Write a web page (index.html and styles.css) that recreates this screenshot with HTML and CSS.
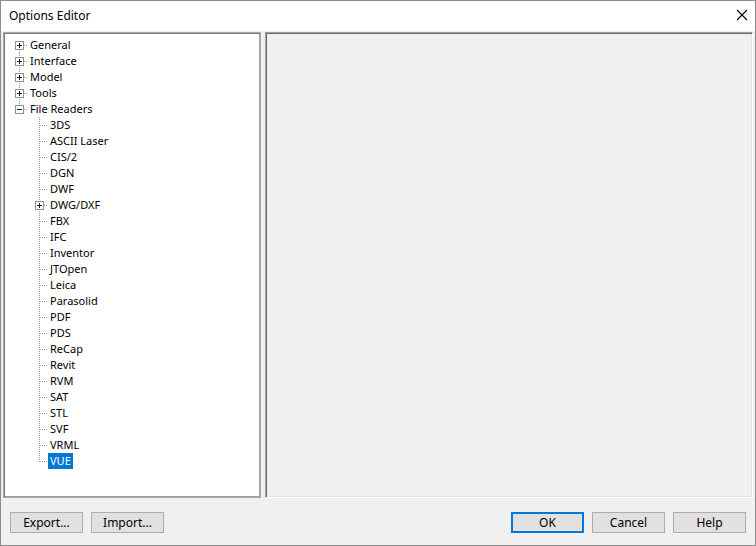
FILE: index.html
```html
<!DOCTYPE html>
<html>
<head>
<meta charset="utf-8">
<link rel="stylesheet" href="styles.css">
</head>
<body>
<div class="window">
  <div class="titlebar">
    <span class="title">Options Editor</span>
    <svg class="close" width="12" height="12" viewBox="0 0 12 12"><path d="M1 1 L11 11 M11 1 L1 11" stroke="#000" stroke-width="1.1" fill="none"/></svg>
  </div>
  <div class="content">
    <div class="panels">
      <div class="tree">
        <div class="row"><svg class="l0" width="18" height="16"><path d="M9.5 13V16" class="dot"/><path d="M14 8.5H18" class="dot"/><rect x="5.5" y="4.5" width="8" height="8" class="box"/><path d="M7 8.5H12M9.5 6V11" class="sign"/></svg><span class="label">General</span></div>
        <div class="row"><svg class="l0" width="18" height="16"><path d="M9.5 0V16" class="dot"/><path d="M14 8.5H18" class="dot"/><rect x="5.5" y="4.5" width="8" height="8" class="box"/><path d="M7 8.5H12M9.5 6V11" class="sign"/></svg><span class="label">Interface</span></div>
        <div class="row"><svg class="l0" width="18" height="16"><path d="M9.5 0V16" class="dot"/><path d="M14 8.5H18" class="dot"/><rect x="5.5" y="4.5" width="8" height="8" class="box"/><path d="M7 8.5H12M9.5 6V11" class="sign"/></svg><span class="label">Model</span></div>
        <div class="row"><svg class="l0" width="18" height="16"><path d="M9.5 0V16" class="dot"/><path d="M14 8.5H18" class="dot"/><rect x="5.5" y="4.5" width="8" height="8" class="box"/><path d="M7 8.5H12M9.5 6V11" class="sign"/></svg><span class="label">Tools</span></div>
        <div class="row"><svg class="l0" width="18" height="16"><path d="M9.5 0V4" class="dot"/><path d="M14 8.5H18" class="dot"/><rect x="5.5" y="4.5" width="8" height="8" class="box"/><path d="M7 8.5H12" class="sign"/></svg><span class="label">File Readers</span></div>

        <div class="row"><svg width="38" height="16"><path d="M29.5 0V16M30 8.5H38" class="dot"/></svg><span class="label">3DS</span></div>
        <div class="row"><svg width="38" height="16"><path d="M29.5 0V16M30 8.5H38" class="dot"/></svg><span class="label">ASCII Laser</span></div>
        <div class="row"><svg width="38" height="16"><path d="M29.5 0V16M30 8.5H38" class="dot"/></svg><span class="label">CIS/2</span></div>
        <div class="row"><svg width="38" height="16"><path d="M29.5 0V16M30 8.5H38" class="dot"/></svg><span class="label">DGN</span></div>
        <div class="row"><svg width="38" height="16"><path d="M29.5 0V16M30 8.5H38" class="dot"/></svg><span class="label">DWF</span></div>
        <div class="row"><svg width="38" height="16"><path d="M29.5 0V16M34 8.5H38" class="dot"/><rect x="25.5" y="4.5" width="8" height="8" class="box"/><path d="M27 8.5H32M29.5 6V11" class="sign"/></svg><span class="label">DWG/DXF</span></div>
        <div class="row"><svg width="38" height="16"><path d="M29.5 0V16M30 8.5H38" class="dot"/></svg><span class="label">FBX</span></div>
        <div class="row"><svg width="38" height="16"><path d="M29.5 0V16M30 8.5H38" class="dot"/></svg><span class="label">IFC</span></div>
        <div class="row"><svg width="38" height="16"><path d="M29.5 0V16M30 8.5H38" class="dot"/></svg><span class="label">Inventor</span></div>
        <div class="row"><svg width="38" height="16"><path d="M29.5 0V16M30 8.5H38" class="dot"/></svg><span class="label">JTOpen</span></div>
        <div class="row"><svg width="38" height="16"><path d="M29.5 0V16M30 8.5H38" class="dot"/></svg><span class="label">Leica</span></div>
        <div class="row"><svg width="38" height="16"><path d="M29.5 0V16M30 8.5H38" class="dot"/></svg><span class="label">Parasolid</span></div>
        <div class="row"><svg width="38" height="16"><path d="M29.5 0V16M30 8.5H38" class="dot"/></svg><span class="label">PDF</span></div>
        <div class="row"><svg width="38" height="16"><path d="M29.5 0V16M30 8.5H38" class="dot"/></svg><span class="label">PDS</span></div>
        <div class="row"><svg width="38" height="16"><path d="M29.5 0V16M30 8.5H38" class="dot"/></svg><span class="label">ReCap</span></div>
        <div class="row"><svg width="38" height="16"><path d="M29.5 0V16M30 8.5H38" class="dot"/></svg><span class="label">Revit</span></div>
        <div class="row"><svg width="38" height="16"><path d="M29.5 0V16M30 8.5H38" class="dot"/></svg><span class="label">RVM</span></div>
        <div class="row"><svg width="38" height="16"><path d="M29.5 0V16M30 8.5H38" class="dot"/></svg><span class="label">SAT</span></div>
        <div class="row"><svg width="38" height="16"><path d="M29.5 0V16M30 8.5H38" class="dot"/></svg><span class="label">STL</span></div>
        <div class="row"><svg width="38" height="16"><path d="M29.5 0V16M30 8.5H38" class="dot"/></svg><span class="label">SVF</span></div>
        <div class="row"><svg width="38" height="16"><path d="M29.5 0V16M30 8.5H38" class="dot"/></svg><span class="label">VRML</span></div>
        <div class="row"><svg width="38" height="16"><path d="M29.5 0V9M30 8.5H38" class="dot"/></svg><span class="label selected">VUE</span></div>
      </div>
      <div class="detail"></div>
    </div>
    <div class="buttons">
      <div class="group">
        <button class="btn">Export...</button>
        <button class="btn">Import...</button>
      </div>
      <div class="group">
        <button class="btn default">OK</button>
        <button class="btn">Cancel</button>
        <button class="btn">Help</button>
      </div>
    </div>
  </div>
</div>
</body>
</html>
```
FILE: styles.css
```css
html, body {
  margin: 0;
  padding: 0;
  background: #f0f0f0;
}
.window {
  box-sizing: border-box;
  width: 756px;
  height: 546px;
  border: 1px solid #8c8c8c;
  background: #f0f0f0;
  display: flex;
  flex-direction: column;
  font-family: "Noto Sans", "Liberation Sans", sans-serif;
  color: #000;
}
.titlebar {
  height: 30px;
  background: #fff;
  display: flex;
  align-items: center;
  justify-content: space-between;
  padding: 0 7px 0 8px;
  flex: none;
}
.title {
  font-size: 12px;
  margin-top: -2px;
}
.close {
  display: block;
  margin-top: -3px;
}
.content {
  flex: 1;
  display: flex;
  flex-direction: column;
  padding: 1px 2px 0 2px;
  min-height: 0;
}
.panels {
  display: flex;
  gap: 4px;
  height: 466px;
  flex: none;
}
.tree {
  box-sizing: border-box;
  width: 258px;
  background: #fff;
  border: 1px solid #a9a9a9;
  box-shadow: inset 1px 1px 0 #7a7a7a, inset -1px -1px 0 #a0a0a0;
  padding: 4px 0 0 6px;
  font-size: 11px;
}
.row {
  display: flex;
  align-items: center;
  height: 16px;
}
.row svg {
  display: block;
  flex: none;
}
.dot {
  stroke: #a0a0a0;
  stroke-width: 1;
  stroke-dasharray: 1 1;
  fill: none;
}
.box {
  fill: #fff;
  stroke: #919191;
  stroke-width: 1;
}
.sign {
  stroke: #1e1e1e;
  stroke-width: 1;
  fill: none;
}
.label {
  padding: 0 2px;
  height: 16px;
  line-height: 16px;
  white-space: nowrap;
}
.selected {
  background: #0078d7;
  color: #fff;
}
.detail {
  box-sizing: border-box;
  flex: 1;
  background: #f0f0f0;
  border: 1px solid;
  border-color: #a0a0a0 #ffffff #ffffff #a0a0a0;
  box-shadow: inset 1px 1px 0 #696969, inset -1px -1px 0 #e3e3e3;
}
.buttons {
  display: flex;
  justify-content: space-between;
  padding: 14px 7px 0 7px;
}
.group {
  display: flex;
  gap: 8px;
}
.btn {
  box-sizing: border-box;
  width: 73px;
  height: 21px;
  background: #e1e1e1;
  border: 1px solid #adadad;
  font-family: "Noto Sans", "Liberation Sans", sans-serif;
  font-size: 12px;
  color: #000;
  padding: 0;
  line-height: 17px;
}
.default {
  border-color: #0078d7;
  box-shadow: inset 0 0 0 1px #0078d7;
}
```
